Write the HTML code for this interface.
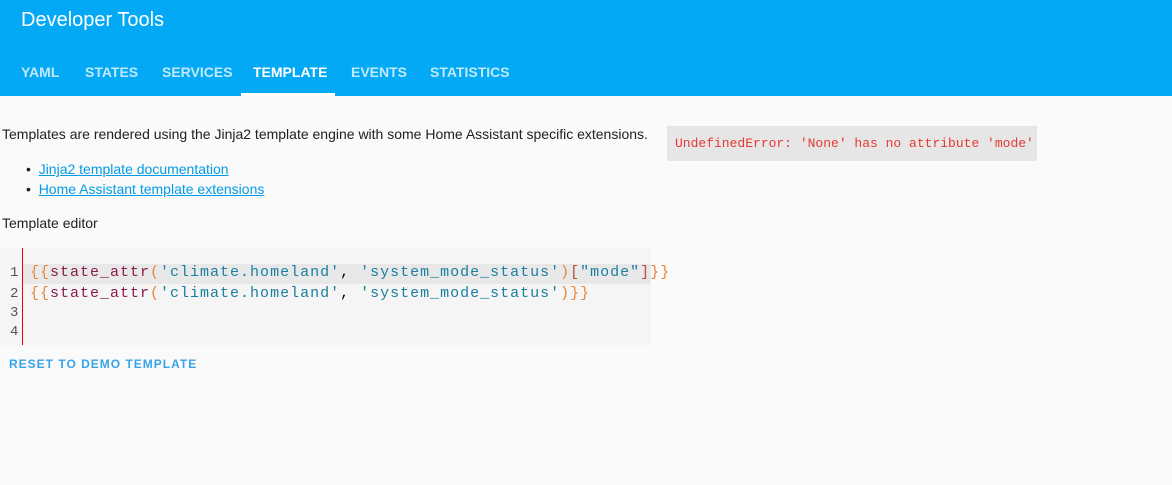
<!DOCTYPE html><html><head><style>
body{margin:0;width:1172px;height:485px;background:#fafafa;font-family:"Liberation Sans",sans-serif;overflow:hidden;position:relative}
.hdr{position:absolute;left:0;top:0;width:1172px;height:96px;background:#03a9f4}
.title{position:absolute;left:21px;top:9px;color:#fff;font-size:20px}
.tab{position:absolute;top:64px;font-size:14px;font-weight:bold;color:rgba(255,255,255,.75)}
.ul{position:absolute;left:241px;top:93px;width:94px;height:3px;background:#fff}
.p{position:absolute;font-size:14px;color:#212121}
a{color:#039be5;text-decoration:underline}
.ed{position:absolute;left:0;top:248px;width:651px;height:97px;background:#f5f5f5}
.hl{position:absolute;left:23px;top:264px;width:628px;height:20px;background:#e8e8e8}
.cur{position:absolute;left:22px;top:248px;width:1px;height:97px;background:#e00}
.ln{position:absolute;left:10px;font:14px "Liberation Mono",monospace;color:#555}
.code{position:absolute;left:30px;font:15px "Liberation Mono",monospace;letter-spacing:1px;white-space:pre}
.b{color:#e8843a}.f{color:#8a1b4c}.s{color:#1a7fa0}.pn{color:#c04848}
.err{position:absolute;left:667px;top:126px;width:370px;height:35px;background:#e6e6e6;font:13px "Liberation Mono",monospace;color:#e53935;line-height:35px;box-sizing:border-box;padding-left:8px;white-space:pre}
</style></head><body>
<div class="hdr"><div class="title">Developer Tools</div>
<div class="tab" style="left:21px">YAML</div>
<div class="tab" style="left:85px">STATES</div>
<div class="tab" style="left:162px">SERVICES</div>
<div class="tab" style="left:253px;color:#fff">TEMPLATE</div>
<div class="tab" style="left:351px">EVENTS</div>
<div class="tab" style="left:430px">STATISTICS</div>
<div class="ul"></div></div>
<div class="p" style="left:2px;top:126px">Templates are rendered using the Jinja2 template engine with some Home Assistant specific extensions.</div>
<div class="p" style="left:26px;top:161px">•&nbsp;&nbsp;<a>Jinja2 template documentation</a></div>
<div class="p" style="left:26px;top:181px">•&nbsp;&nbsp;<a>Home Assistant template extensions</a></div>
<div class="p" style="left:2px;top:215px">Template editor</div>
<div class="ed"></div><div class="hl"></div><div class="cur"></div>
<div class="ln" style="top:265px">1</div><div class="ln" style="top:286px">2</div><div class="ln" style="top:305px">3</div><div class="ln" style="top:324px">4</div>
<div class="code" style="top:264px"><span class="b">{{</span><span class="f">state_attr</span><span class="b">(</span><span class="s">'climate.homeland'</span>, <span class="s">'system_mode_status'</span><span class="b">)</span><span class="pn">[</span><span class="s">"mode"</span><span class="pn">]</span><span class="b">}}</span></div>
<div class="code" style="top:285px"><span class="b">{{</span><span class="f">state_attr</span><span class="b">(</span><span class="s">'climate.homeland'</span>, <span class="s">'system_mode_status'</span><span class="b">)}}</span></div>
<div style="position:absolute;left:9px;top:357px;font-size:12px;font-weight:bold;letter-spacing:1px;color:#39a3e8">RESET TO DEMO TEMPLATE</div>
<div class="err">UndefinedError: 'None' has no attribute 'mode'</div>
</body></html>
